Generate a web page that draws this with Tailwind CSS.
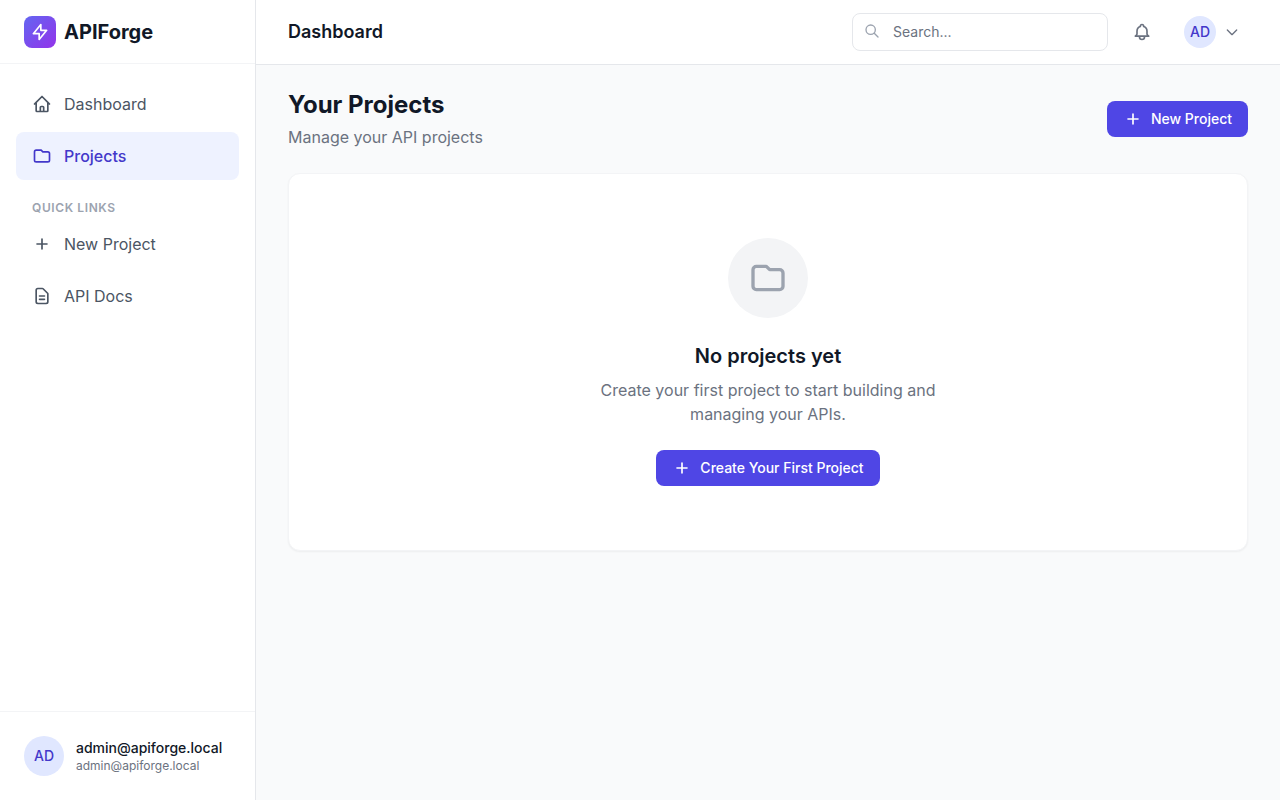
<!DOCTYPE html>
<html lang="en">
<head>
  <meta charset="UTF-8" />
  <meta name="viewport" content="width=device-width, initial-scale=1.0" />
  <title>APIForge - Projects</title>
  <script src="https://cdn.jsdelivr.net/npm/@tailwindcss/browser@4"></script>
  <style>
    body {
      font-family: 'Inter', sans-serif;
    }
  </style>
</head>
<body class="bg-[#f9fafb] text-[#111827] antialiased">
  <div class="flex min-h-screen">
    <!-- Sidebar -->
    <aside class="w-64 shrink-0 bg-white border-r border-[#e5e7eb] flex flex-col">
      <div class="h-16 px-6 flex items-center gap-2 border-b border-[#f3f4f6]">
        <div class="w-8 h-8 rounded-lg bg-linear-to-br/srgb from-[#6366f1] to-[#9333ea] flex items-center justify-center">
          <svg class="w-5 h-5 text-white" fill="none" stroke="currentColor" stroke-width="2" stroke-linecap="round" stroke-linejoin="round" viewBox="0 0 24 24"><path d="M13 10V3L4 14h7v7l9-11h-7z" /></svg>
        </div>
        <span class="text-xl font-bold">APIForge</span>
      </div>

      <nav class="flex-1 p-4 flex flex-col gap-1 text-[#4b5563]">
        <a href="#" class="flex items-center gap-3 px-4 py-3 rounded-lg hover:bg-[#f9fafb]">
          <svg class="w-5 h-5" fill="none" stroke="currentColor" stroke-width="2" stroke-linecap="round" stroke-linejoin="round" viewBox="0 0 24 24"><path d="M3 12l2-2m0 0l7-7 7 7M5 10v10a1 1 0 001 1h3m10-11l2 2m-2-2v10a1 1 0 01-1 1h-3m-6 0a1 1 0 001-1v-4a1 1 0 011-1h2a1 1 0 011 1v4a1 1 0 001 1m-6 0h6" /></svg>
          Dashboard
        </a>
        <a href="#" class="flex items-center gap-3 px-4 py-3 rounded-lg bg-[#eef2ff] text-[#4338ca] font-medium">
          <svg class="w-5 h-5" fill="none" stroke="currentColor" stroke-width="2" stroke-linecap="round" stroke-linejoin="round" viewBox="0 0 24 24"><path d="M3 7v10a2 2 0 002 2h14a2 2 0 002-2V9a2 2 0 00-2-2h-6l-2-2H5a2 2 0 00-2 2z" /></svg>
          Projects
        </a>
        <p class="px-4 pt-4 text-xs font-semibold uppercase tracking-wider text-[#9ca3af]">Quick Links</p>
        <a href="#" class="flex items-center gap-3 px-4 py-3 rounded-lg hover:bg-[#f9fafb]">
          <svg class="w-5 h-5" fill="none" stroke="currentColor" stroke-width="2" stroke-linecap="round" stroke-linejoin="round" viewBox="0 0 24 24"><path d="M12 6v6m0 0v6m0-6h6m-6 0H6" /></svg>
          New Project
        </a>
        <a href="#" class="flex items-center gap-3 px-4 py-3 rounded-lg hover:bg-[#f9fafb]">
          <svg class="w-5 h-5" fill="none" stroke="currentColor" stroke-width="2" stroke-linecap="round" stroke-linejoin="round" viewBox="0 0 24 24"><path d="M9 12h6m-6 4h6m2 5H7a2 2 0 01-2-2V5a2 2 0 012-2h5.586a1 1 0 01.707.293l5.414 5.414a1 1 0 01.293.707V19a2 2 0 01-2 2z" /></svg>
          API Docs
        </a>
      </nav>

      <div class="p-6 flex items-center gap-3 border-t border-[#f3f4f6]">
        <div class="w-10 h-10 rounded-full bg-[#e0e7ff] text-[#4338ca] text-sm font-medium flex items-center justify-center">AD</div>
        <div class="min-w-0">
          <p class="text-sm font-medium truncate">admin@apiforge.local</p>
          <p class="text-xs text-[#6b7280] truncate">admin@apiforge.local</p>
        </div>
      </div>
    </aside>

    <div class="flex-1 min-w-0">
      <!-- Header -->
      <header class="bg-white border-b border-[#e5e7eb]">
        <div class="h-16 px-8 flex items-center justify-between">
          <h1 class="text-lg font-semibold">Dashboard</h1>
          <div class="flex items-center gap-4">
            <div class="relative">
              <input type="text" aria-label="Search" placeholder="Search..." class="block w-64 pl-10 pr-4 py-2 text-sm bg-white border border-[#e5e7eb] rounded-lg placeholder:text-[#6b7280]">
              <svg class="absolute left-3 top-2.5 w-4 h-4 text-[#9ca3af]" fill="none" stroke="currentColor" stroke-width="2" stroke-linecap="round" stroke-linejoin="round" viewBox="0 0 24 24"><path d="M21 21l-6-6m2-5a7 7 0 11-14 0 7 7 0 0114 0z" /></svg>
            </div>
            <button type="button" aria-label="Notifications" class="p-2 rounded-lg text-[#6b7280] hover:bg-[#f3f4f6]">
              <svg class="w-5 h-5" fill="none" stroke="currentColor" stroke-width="2" stroke-linecap="round" stroke-linejoin="round" viewBox="0 0 24 24"><path d="M15 17h5l-1.405-1.405A2.032 2.032 0 0118 14.158V11a6.002 6.002 0 00-4-5.659V5a2 2 0 10-4 0v.341C7.67 6.165 6 8.388 6 11v3.159c0 .538-.214 1.055-.595 1.436L4 17h5m6 0v1a3 3 0 11-6 0v-1m6 0H9" /></svg>
            </button>
            <button type="button" class="p-2 flex items-center gap-2 rounded-lg hover:bg-[#f3f4f6]">
              <span class="w-8 h-8 rounded-full bg-[#e0e7ff] text-[#4338ca] text-sm font-medium flex items-center justify-center">AD</span>
              <svg class="w-4 h-4 text-[#6b7280]" fill="none" stroke="currentColor" stroke-width="2" stroke-linecap="round" stroke-linejoin="round" viewBox="0 0 24 24"><path d="M19 9l-7 7-7-7" /></svg>
            </button>
          </div>
        </div>
      </header>

      <!-- Projects -->
      <main class="px-8 py-6">
        <div class="flex items-center justify-between mb-6">
          <div>
            <h2 class="text-2xl font-bold">Your Projects</h2>
            <p class="mt-1 text-[#6b7280]">Manage your API projects</p>
          </div>
          <button type="button" class="px-4 py-2 inline-flex items-center gap-2 rounded-lg bg-[#4f46e5] text-white text-sm font-medium hover:bg-[#4338ca]">
            <svg class="w-5 h-5" fill="none" stroke="currentColor" stroke-width="2" stroke-linecap="round" stroke-linejoin="round" viewBox="0 0 24 24"><path d="M12 6v6m0 0v6m0-6h6m-6 0H6" /></svg>
            New Project
          </button>
        </div>

        <!-- Empty state -->
        <section class="bg-white border border-[#f3f4f6] rounded-xl shadow-xs py-16 flex flex-col items-center text-center">
          <div class="w-20 h-20 mb-6 rounded-full bg-[#f3f4f6] text-[#9ca3af] flex items-center justify-center">
            <svg class="w-10 h-10" fill="none" stroke="currentColor" stroke-width="2" stroke-linecap="round" stroke-linejoin="round" viewBox="0 0 24 24"><path d="M3 7v10a2 2 0 002 2h14a2 2 0 002-2V9a2 2 0 00-2-2h-6l-2-2H5a2 2 0 00-2 2z" /></svg>
          </div>
          <h3 class="mb-2 text-xl font-semibold">No projects yet</h3>
          <p class="max-w-sm mb-6 text-[#6b7280]">Create your first project to start building and managing your APIs.</p>
          <button type="button" class="px-4 py-2 inline-flex items-center gap-2 rounded-lg bg-[#4f46e5] text-white text-sm font-medium hover:bg-[#4338ca]">
            <svg class="w-5 h-5" fill="none" stroke="currentColor" stroke-width="2" stroke-linecap="round" stroke-linejoin="round" viewBox="0 0 24 24"><path d="M12 6v6m0 0v6m0-6h6m-6 0H6" /></svg>
            Create Your First Project
          </button>
        </section>
      </main>
    </div>
  </div>
</body>
</html>
